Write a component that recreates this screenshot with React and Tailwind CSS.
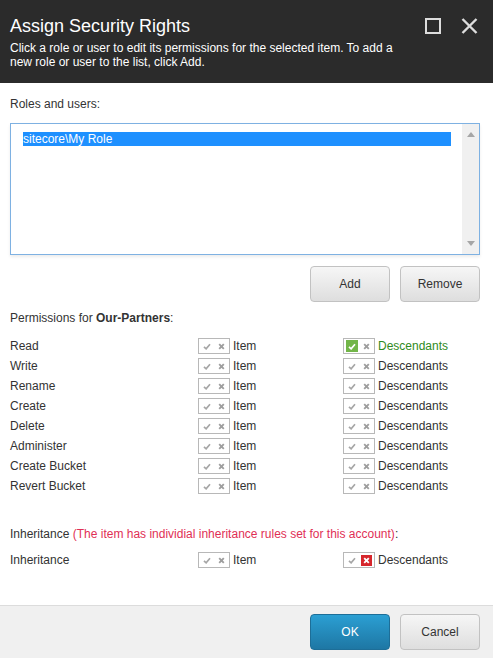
// Assign Security Rights dialog

const permissions = [
  { name: 'Read', descendants: 'allow' },
  { name: 'Write' },
  { name: 'Rename' },
  { name: 'Create' },
  { name: 'Delete' },
  { name: 'Administer' },
  { name: 'Create Bucket' },
  { name: 'Revert Bucket' },
]

function CheckGlyph({ color = '#a6a6a6' }) {
  return (
    <svg width="8" height="7" viewBox="0 0 8 7">
      <path d="M1 3.8 L3.1 5.8 L7 1.2" fill="none" stroke={color} strokeWidth="1.7" />
    </svg>
  )
}

function CrossGlyph({ color = '#9e9e9e' }) {
  return (
    <svg width="7" height="7" viewBox="0 0 7 7">
      <path d="M1.2 1.2 L5.8 5.8 M5.8 1.2 L1.2 5.8" fill="none" stroke={color} strokeWidth="1.9" />
    </svg>
  )
}

// Two-slot allow / deny toggle
function Toggle({ state }) {
  return (
    <div className="flex w-[32px] h-[16px] border border-[#b8b8b8] bg-white">
      <div className="flex-1 flex items-center justify-center">
        {state === 'allow' ? (
          <div className="w-[12px] h-[12px] bg-[#72b548] flex items-center justify-center">
            <CheckGlyph color="#ffffff" />
          </div>
        ) : (
          <CheckGlyph />
        )}
      </div>
      <div className="flex-1 flex items-center justify-center">
        {state === 'deny' ? (
          <div className="w-[11px] h-[11px] bg-[#d6262c] flex items-center justify-center">
            <CrossGlyph color="#ffffff" />
          </div>
        ) : (
          <CrossGlyph />
        )}
      </div>
    </div>
  )
}

function ToggleCell({ state, label }) {
  return (
    <div className="flex items-center gap-[3px]">
      <Toggle state={state} />
      <span className={state === 'allow' ? 'text-[#2f8a22]' : 'text-[#333333]'}>{label}</span>
    </div>
  )
}

function PermissionRow({ name, item, descendants }) {
  return (
    <div className="grid grid-cols-[188px_145px_1fr] items-center h-[20px]">
      <span>{name}</span>
      <ToggleCell state={item} label="Item" />
      <ToggleCell state={descendants} label="Descendants" />
    </div>
  )
}

function GrayButton({ children }) {
  return (
    <button className="w-[80px] h-[36px] rounded-[4px] border border-[#c2c2c2] bg-gradient-to-b from-[#f6f6f6] to-[#dedede] text-[#333333] text-[12px]">
      {children}
    </button>
  )
}

export default function App() {
  return (
    <div className="w-[493px] h-[658px] flex flex-col bg-white font-['Liberation_Sans',Arial,sans-serif] text-[12px] text-[#333333]">
      {/* Header */}
      <div className="h-[83px] bg-[#2b2b2b] text-white pl-[10px] pr-[15px] pt-[15px] flex justify-between items-start">
        <div>
          <h1 className="text-[18px] leading-[22px]">Assign Security Rights</h1>
          <p className="mt-[4px] w-[405px] leading-[14px]">
            Click a role or user to edit its permissions for the selected item. To add a new role or user to the list, click Add.
          </p>
        </div>
        <div className="flex items-center gap-[20px] mt-[3px]">
          <svg width="16" height="16" viewBox="0 0 16 16">
            <rect x="1" y="1" width="14" height="14" fill="none" stroke="#dddddd" strokeWidth="2" />
          </svg>
          <svg width="17" height="16" viewBox="0 0 17 16">
            <path d="M1.5 1 L15.5 15 M15.5 1 L1.5 15" stroke="#dddddd" strokeWidth="2.4" />
          </svg>
        </div>
      </div>

      {/* Body */}
      <div className="flex-1 pl-[10px] pr-[13px] pt-[13px]">
        <p className="leading-[16px]">Roles and users:</p>

        <div className="mt-[11px] h-[132px] border border-[#7eb1e2] flex shadow-[0_2px_3px_rgba(0,0,0,0.08)]">
          <div className="flex-1 pt-[8px] pl-[12px] pr-[11px]">
            <div className="h-[14px] bg-[#1e90ff] text-white leading-[14px]">sitecore\My Role</div>
          </div>
          <div className="w-[17px] bg-[#f0f0f0] flex flex-col items-center justify-between py-[8px]">
            <svg width="8" height="5" viewBox="0 0 8 5">
              <polygon points="4,0 8,5 0,5" fill="#a6a6a6" />
            </svg>
            <svg width="8" height="5" viewBox="0 0 8 5">
              <polygon points="0,0 8,0 4,5" fill="#a6a6a6" />
            </svg>
          </div>
        </div>

        <div className="mt-[11px] flex justify-end gap-[10px]">
          <GrayButton>Add</GrayButton>
          <GrayButton>Remove</GrayButton>
        </div>

        <p className="mt-[8px] leading-[16px]">
          Permissions for <span className="font-bold">Our-Partners</span>:
        </p>

        <div className="mt-[10px]">
          {permissions.map((p) => (
            <PermissionRow key={p.name} name={p.name} item={p.item} descendants={p.descendants} />
          ))}
        </div>

        <p className="mt-[30px] leading-[16px]">
          Inheritance <span className="text-[#df2f55]">(The item has individial inheritance rules set for this account)</span>:
        </p>

        <div className="mt-[8px]">
          <PermissionRow name="Inheritance" descendants="deny" />
        </div>
      </div>

      {/* Footer */}
      <div className="h-[53px] border-t border-[#dcdcdc] bg-[#f0f0f0] flex items-center justify-end gap-[10px] pr-[13px]">
        <button className="w-[80px] h-[36px] rounded-[4px] border border-[#1d6e98] bg-gradient-to-b from-[#2b9fd3] to-[#1e77a4] text-white text-[12px]">
          OK
        </button>
        <GrayButton>Cancel</GrayButton>
      </div>
    </div>
  )
}
